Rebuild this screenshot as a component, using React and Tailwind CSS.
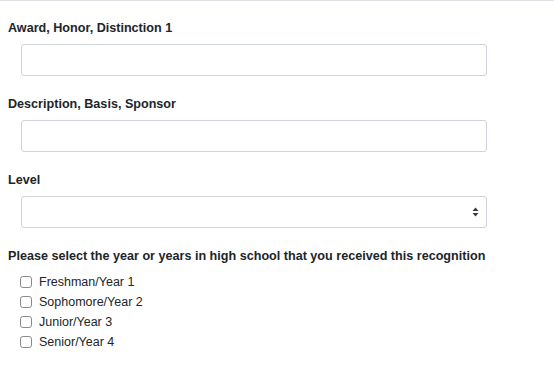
import React from "react";

function Field({ label, children }) {
  return (
    <div className="flex flex-col">
      <label className="text-[12.6px] leading-[16px] font-bold text-[#212529]">{label}</label>
      <div className="pl-[13px] pt-[8px] pb-[20px]">{children}</div>
    </div>
  );
}

export default function App() {
  const years = ["Freshman/Year 1", "Sophomore/Year 2", "Junior/Year 3", "Senior/Year 4"];
  return (
    <div className="w-[554px] h-[380px] bg-white border-t border-[#dee2e6]" style={{ fontFamily: '"Liberation Sans", Arial, sans-serif' }}>
      <div className="pl-[8px] pt-[19px]">
        <Field label="Award, Honor, Distinction 1">
          <input className="block w-[466px] h-[32px] border border-[#ced4da] rounded-[3px] bg-white" />
        </Field>
        <Field label="Description, Basis, Sponsor">
          <input className="block w-[466px] h-[32px] border border-[#ced4da] rounded-[3px] bg-white" />
        </Field>
        <Field label="Level">
          <div className="flex items-center justify-end w-[466px] h-[32px] border border-[#ced4da] rounded-[3px] bg-white pr-[7px]">
            <svg width="7" height="10" viewBox="0 0 7 10">
              <path d="M3.5 0.5 L6.5 4 L0.5 4 Z" fill="#3a3a3a" />
              <path d="M3.5 9.5 L6.5 6 L0.5 6 Z" fill="#3a3a3a" />
            </svg>
          </div>
        </Field>
        <div className="flex flex-col">
          <div className="text-[12.6px] leading-[16px] font-bold text-[#212529]">
            Please select the year or years in high school that you received this recognition
          </div>
          <div className="flex flex-col pt-[8px] pl-[12px]">
            {years.map((y) => (
              <label key={y} className="flex items-center h-[20px] text-[12.5px] text-[#212529]">
                <span className="w-[12px] h-[12px] border border-[#8a8a8a] rounded-[3px] bg-white mr-[7px]" />
                {y}
              </label>
            ))}
          </div>
        </div>
      </div>
    </div>
  );
}
